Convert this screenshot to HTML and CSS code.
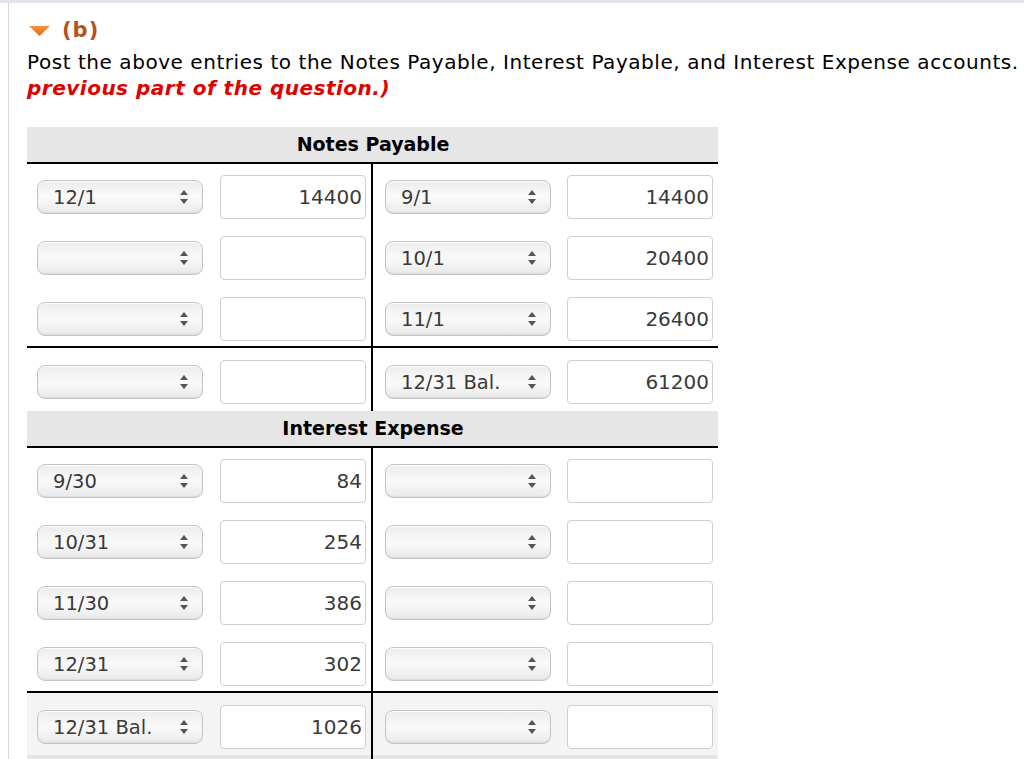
FILE: index.html
```html
<!DOCTYPE html>
<html>
<head>
<meta charset="utf-8">
<link rel="stylesheet" href="styles.css">
</head>
<body>
<div class="screen">
  <div class="frame">
    <div class="part-head">
      <svg class="tri" width="21" height="10" viewBox="0 0 21 10"><defs><linearGradient id="tg" x1="0" y1="0" x2="0" y2="1"><stop offset="0" stop-color="#f7953b"/><stop offset="1" stop-color="#e5661a"/></linearGradient></defs><polygon points="0,0 21,0 10.5,10" fill="url(#tg)"/></svg>
      <span class="part-label">(b)</span>
    </div>
    <div class="prompt">Post the above entries to the Notes Payable, Interest Payable, and Interest Expense accounts.</div>
    <div class="prompt-note">previous part of the question.)</div>

    <div class="ledger">
      <div class="acct-title">Notes Payable</div>
      <div class="acct-body">
        <div class="row first">
          <div class="cell dr"><div class="dd"><span class="dd-text">12/1</span><span class="dd-arrows"><svg width="8" height="14" viewBox="0 0 8 14"><polygon points="4,0 8,5 0,5" fill="#555"/><polygon points="0,9 8,9 4,14" fill="#555"/></svg></span></div><input class="amt" type="text" value="14400"></div>
          <div class="cell cr"><div class="dd"><span class="dd-text">9/1</span><span class="dd-arrows"><svg width="8" height="14" viewBox="0 0 8 14"><polygon points="4,0 8,5 0,5" fill="#555"/><polygon points="0,9 8,9 4,14" fill="#555"/></svg></span></div><input class="amt" type="text" value="14400"></div>
        </div>
        <div class="row">
          <div class="cell dr"><div class="dd"><span class="dd-text"></span><span class="dd-arrows"><svg width="8" height="14" viewBox="0 0 8 14"><polygon points="4,0 8,5 0,5" fill="#555"/><polygon points="0,9 8,9 4,14" fill="#555"/></svg></span></div><input class="amt" type="text" value=""></div>
          <div class="cell cr"><div class="dd"><span class="dd-text">10/1</span><span class="dd-arrows"><svg width="8" height="14" viewBox="0 0 8 14"><polygon points="4,0 8,5 0,5" fill="#555"/><polygon points="0,9 8,9 4,14" fill="#555"/></svg></span></div><input class="amt" type="text" value="20400"></div>
        </div>
        <div class="row pre-bal">
          <div class="cell dr"><div class="dd"><span class="dd-text"></span><span class="dd-arrows"><svg width="8" height="14" viewBox="0 0 8 14"><polygon points="4,0 8,5 0,5" fill="#555"/><polygon points="0,9 8,9 4,14" fill="#555"/></svg></span></div><input class="amt" type="text" value=""></div>
          <div class="cell cr"><div class="dd"><span class="dd-text">11/1</span><span class="dd-arrows"><svg width="8" height="14" viewBox="0 0 8 14"><polygon points="4,0 8,5 0,5" fill="#555"/><polygon points="0,9 8,9 4,14" fill="#555"/></svg></span></div><input class="amt" type="text" value="26400"></div>
        </div>
        <div class="row bal">
          <div class="cell dr"><div class="dd"><span class="dd-text"></span><span class="dd-arrows"><svg width="8" height="14" viewBox="0 0 8 14"><polygon points="4,0 8,5 0,5" fill="#555"/><polygon points="0,9 8,9 4,14" fill="#555"/></svg></span></div><input class="amt" type="text" value=""></div>
          <div class="cell cr"><div class="dd"><span class="dd-text">12/31 Bal.</span><span class="dd-arrows"><svg width="8" height="14" viewBox="0 0 8 14"><polygon points="4,0 8,5 0,5" fill="#555"/><polygon points="0,9 8,9 4,14" fill="#555"/></svg></span></div><input class="amt" type="text" value="61200"></div>
        </div>
      </div>

      <div class="acct-title">Interest Expense</div>
      <div class="acct-body">
        <div class="row first">
          <div class="cell dr"><div class="dd"><span class="dd-text">9/30</span><span class="dd-arrows"><svg width="8" height="14" viewBox="0 0 8 14"><polygon points="4,0 8,5 0,5" fill="#555"/><polygon points="0,9 8,9 4,14" fill="#555"/></svg></span></div><input class="amt" type="text" value="84"></div>
          <div class="cell cr"><div class="dd"><span class="dd-text"></span><span class="dd-arrows"><svg width="8" height="14" viewBox="0 0 8 14"><polygon points="4,0 8,5 0,5" fill="#555"/><polygon points="0,9 8,9 4,14" fill="#555"/></svg></span></div><input class="amt" type="text" value=""></div>
        </div>
        <div class="row">
          <div class="cell dr"><div class="dd"><span class="dd-text">10/31</span><span class="dd-arrows"><svg width="8" height="14" viewBox="0 0 8 14"><polygon points="4,0 8,5 0,5" fill="#555"/><polygon points="0,9 8,9 4,14" fill="#555"/></svg></span></div><input class="amt" type="text" value="254"></div>
          <div class="cell cr"><div class="dd"><span class="dd-text"></span><span class="dd-arrows"><svg width="8" height="14" viewBox="0 0 8 14"><polygon points="4,0 8,5 0,5" fill="#555"/><polygon points="0,9 8,9 4,14" fill="#555"/></svg></span></div><input class="amt" type="text" value=""></div>
        </div>
        <div class="row">
          <div class="cell dr"><div class="dd"><span class="dd-text">11/30</span><span class="dd-arrows"><svg width="8" height="14" viewBox="0 0 8 14"><polygon points="4,0 8,5 0,5" fill="#555"/><polygon points="0,9 8,9 4,14" fill="#555"/></svg></span></div><input class="amt" type="text" value="386"></div>
          <div class="cell cr"><div class="dd"><span class="dd-text"></span><span class="dd-arrows"><svg width="8" height="14" viewBox="0 0 8 14"><polygon points="4,0 8,5 0,5" fill="#555"/><polygon points="0,9 8,9 4,14" fill="#555"/></svg></span></div><input class="amt" type="text" value=""></div>
        </div>
        <div class="row pre-bal">
          <div class="cell dr"><div class="dd"><span class="dd-text">12/31</span><span class="dd-arrows"><svg width="8" height="14" viewBox="0 0 8 14"><polygon points="4,0 8,5 0,5" fill="#555"/><polygon points="0,9 8,9 4,14" fill="#555"/></svg></span></div><input class="amt" type="text" value="302"></div>
          <div class="cell cr"><div class="dd"><span class="dd-text"></span><span class="dd-arrows"><svg width="8" height="14" viewBox="0 0 8 14"><polygon points="4,0 8,5 0,5" fill="#555"/><polygon points="0,9 8,9 4,14" fill="#555"/></svg></span></div><input class="amt" type="text" value=""></div>
        </div>
        <div class="row bal shaded">
          <div class="cell dr"><div class="dd"><span class="dd-text">12/31 Bal.</span><span class="dd-arrows"><svg width="8" height="14" viewBox="0 0 8 14"><polygon points="4,0 8,5 0,5" fill="#555"/><polygon points="0,9 8,9 4,14" fill="#555"/></svg></span></div><input class="amt" type="text" value="1026"></div>
          <div class="cell cr"><div class="dd"><span class="dd-text"></span><span class="dd-arrows"><svg width="8" height="14" viewBox="0 0 8 14"><polygon points="4,0 8,5 0,5" fill="#555"/><polygon points="0,9 8,9 4,14" fill="#555"/></svg></span></div><input class="amt" type="text" value=""></div>
        </div>
        <div class="row foot">
          <div class="cell dr"></div>
          <div class="cell cr"></div>
        </div>
      </div>
    </div>
  </div>
</div>
</body>
</html>
```

FILE: styles.css
```css
* { box-sizing: border-box; }
html, body { margin: 0; padding: 0; background: #fff; overflow: hidden; }
body { font-family: "DejaVu Sans", Verdana, sans-serif; color: #000; }

.screen {
  border-top: 3px solid #e1e5eb;
  height: 759px;
  overflow: hidden;
}
.frame {
  margin-left: 8px;
  border-left: 1px solid #d6dbe2;
  padding-left: 18px;
  min-height: 756px;
}

.part-head {
  display: flex;
  align-items: center;
  gap: 12px;
  padding-top: 14px;
  height: 40px;
  padding-left: 2px;
}
.tri { display: block; margin-top: 1px; }
.part-label {
  font-size: 21px;
  font-weight: bold;
  color: #b6521c;
  letter-spacing: 1px;
}

.prompt {
  font-size: 20px;
  letter-spacing: 0.55px;
  line-height: 26px;
  white-space: nowrap;
  margin-top: 6px;
}
.prompt-note {
  font-size: 20px;
  letter-spacing: 0.5px;
  line-height: 26px;
  font-weight: bold;
  font-style: italic;
  color: #e00000;
}

.ledger {
  width: 691px;
  margin-top: 26px;
}
.acct-title {
  height: 37px;
  background: #e6e6e6;
  border-bottom: 2px solid #000;
  text-align: center;
  font-weight: bold;
  font-size: 19px;
  line-height: 35px;
  padding-left: 1px;
}

.row {
  display: grid;
  grid-template-columns: 346px 345px;
}
.cell {
  display: flex;
  align-items: center;
  padding: 8px 5px 9px 10px;
  gap: 17px;
}
.cell.dr { border-right: 2px solid #000; }
.cell.cr { padding-left: 12px; gap: 16px; }

.row.first .cell { padding-top: 11px; }
.row.pre-bal .cell { padding-bottom: 5px; }
.row.bal { border-top: 2px solid #000; }
.row.bal .cell { padding-top: 12px; padding-bottom: 7px; }
.row.shaded { background: #f4f4f4; }
.row.shaded .cell { padding-bottom: 6px; }
.row.foot { background: #e6e6e6; height: 8px; }
.row.foot .cell { padding: 0; }

.dd {
  flex: 0 0 166px;
  width: 166px;
  height: 34px;
  border: 1px solid #c4c4c4;
  border-radius: 8px;
  background: linear-gradient(#ececec 0%, #f9f9f9 45%, #f7f7f7 60%, #e9e9e9 100%);
  box-shadow: inset 0 1px 1px rgba(255,255,255,0.9), inset 0 -1px 2px rgba(0,0,0,0.06);
  display: flex;
  align-items: center;
  justify-content: space-between;
  padding: 0 14px 0 15px;
}
.dd-text {
  font-size: 19.5px;
  color: #3a3a3a;
  white-space: nowrap;
}
.dd-arrows { display: flex; align-items: center; }
.dd-arrows svg { display: block; }

.amt {
  flex: 0 0 146px;
  width: 146px;
  height: 44px;
  border: 1px solid #cfcfcf;
  border-radius: 4px;
  background: #fff;
  font-family: "DejaVu Sans", Verdana, sans-serif;
  font-size: 20px;
  color: #3a3a3a;
  text-align: right;
  padding: 0 3px 0 6px;
  margin: 0;
  outline: none;
}
```
